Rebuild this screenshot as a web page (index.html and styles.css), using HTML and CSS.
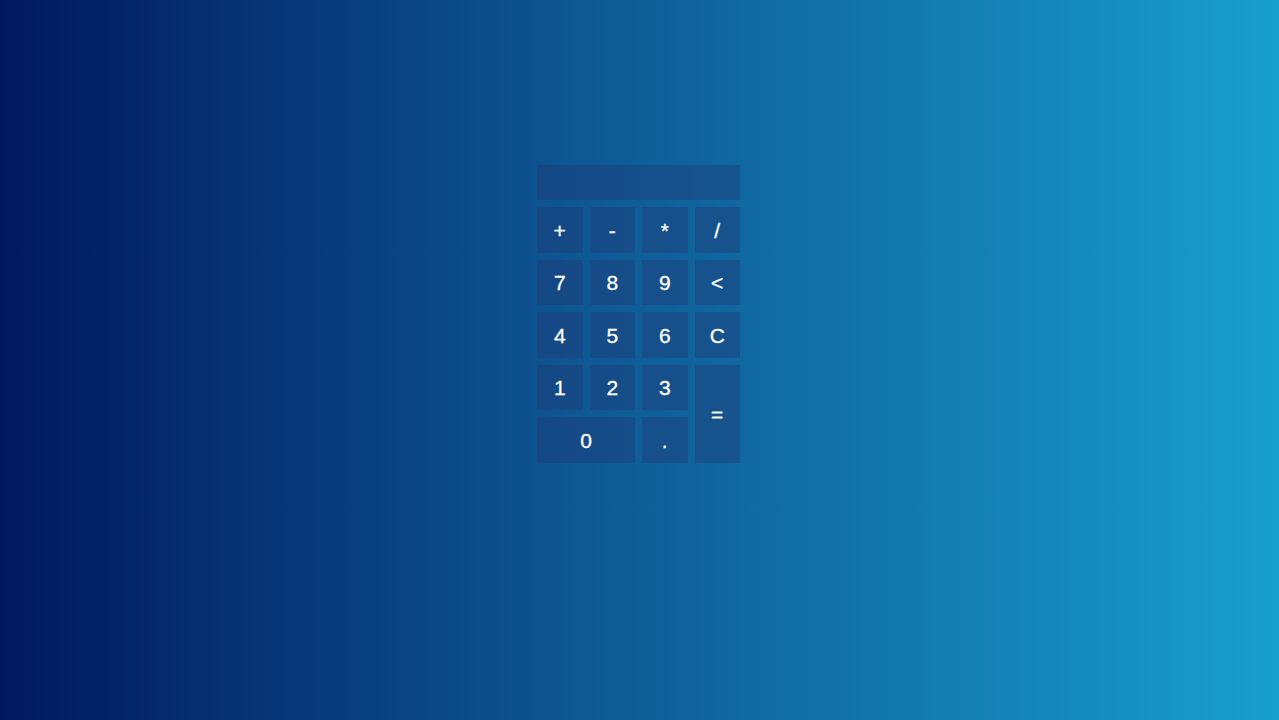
FILE: index.html
```html
<!DOCTYPE html>
<html>
<head>
<meta charset="utf-8">
<link rel="stylesheet" href="styles.css">
</head>
<body>
<div class="page">
  <div class="calc">
    <div class="display"></div>
    <div class="keys">
      <div class="key">+</div>
      <div class="key">-</div>
      <div class="key">*</div>
      <div class="key">/</div>
      <div class="key">7</div>
      <div class="key">8</div>
      <div class="key">9</div>
      <div class="key">&lt;</div>
      <div class="key">4</div>
      <div class="key">5</div>
      <div class="key">6</div>
      <div class="key">C</div>
      <div class="key">1</div>
      <div class="key">2</div>
      <div class="key">3</div>
      <div class="key eq">=</div>
      <div class="key zero">0</div>
      <div class="key">.</div>
    </div>
  </div>
</div>
</body>
</html>
```
FILE: styles.css
```css
html, body {
  margin: 0;
  padding: 0;
  width: 100%;
  height: 100%;
}
body {
  background: linear-gradient(to right, #01185e 0%, #0f5e98 50%, #189fce 100%);
  font-family: "Liberation Sans", Arial, sans-serif;
}
.page {
  height: 720px;
  padding-top: 165px;
  padding-right: 2px;
  box-sizing: border-box;
  display: flex;
  justify-content: center;
}
.calc {
  width: 203px;
  display: flex;
  flex-direction: column;
  gap: 7px;
}
.display {
  height: 35px;
  background: rgba(30, 60, 120, 0.45);
}
.keys {
  display: grid;
  grid-template-columns: repeat(4, 45.5px);
  grid-auto-rows: 45.5px;
  column-gap: 7px;
  row-gap: 7px;
}
.key {
  background: rgba(30, 60, 120, 0.45);
  color: #ffffff;
  font-size: 21px;
  padding-top: 2px;
  box-sizing: border-box;
  display: flex;
  align-items: center;
  justify-content: center;
  -webkit-text-stroke: 0.3px #ffffff;
}
.eq {
  grid-column: 4;
  grid-row: 4 / span 2;
}
.zero {
  grid-column: 1 / span 2;
}
```
